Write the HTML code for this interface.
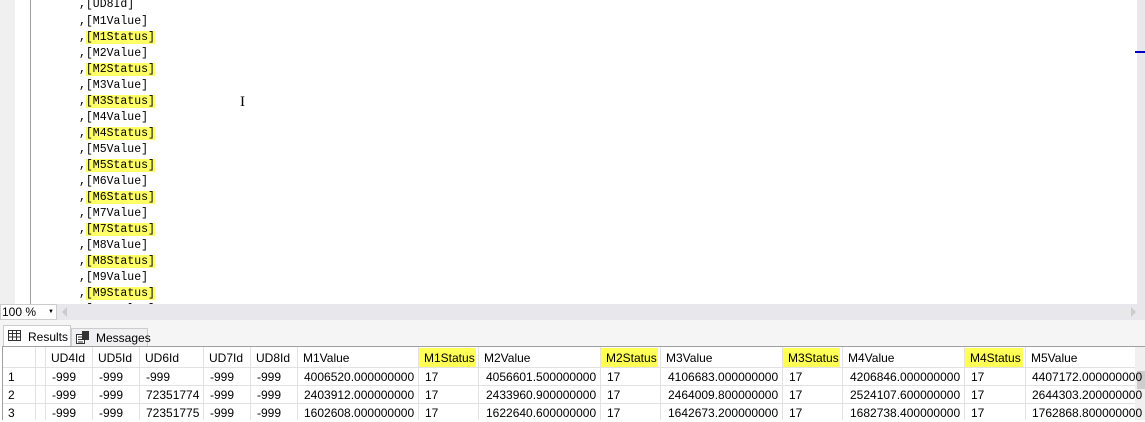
<!DOCTYPE html>
<html><head><meta charset="utf-8"><style>
*{margin:0;padding:0;box-sizing:border-box}
body{width:1145px;height:420px;overflow:hidden;background:#fff;position:relative;font-family:"Liberation Sans",sans-serif}
.abs{position:absolute}
.code{position:absolute;left:79px;font-family:"Liberation Mono",monospace;font-size:11.5px;line-height:16px;height:16px;color:#000;white-space:pre}
.hl{background:#ffff66}
.cell{position:absolute;font-size:12px;color:#000;white-space:nowrap;line-height:18px}
.vl{position:absolute;top:347px;width:1px;height:73px;background:#e2e2e2}
.hlh{position:absolute;background:#ffff55;top:348px;height:19px}
</style></head><body>
<div class="abs" style="left:0;top:0;width:15px;height:304px;background:#f0f0f0"></div>
<div class="abs" style="left:30px;top:0;width:1px;height:304px;background:#a0a0a0"></div>
<div class="abs" style="left:1137px;top:0;width:8px;height:304px;background:#e8e8ec"></div>
<div class="abs" style="left:1135px;top:51px;width:10px;height:2px;background:#0000c8"></div>
<div class="abs" style="left:240px;top:95px;width:8px;height:17px;font-size:15px;line-height:15px;color:#000;font-family:'Liberation Serif',serif">I</div>

<div class="code" style="top:-3px">,[UD8Id]</div>
<div class="code" style="top:14px">,[M1Value]</div>
<div class="code" style="top:30px">,<span class="hl">[M1Status]</span></div>
<div class="code" style="top:46px">,[M2Value]</div>
<div class="code" style="top:62px">,<span class="hl">[M2Status]</span></div>
<div class="code" style="top:78px">,[M3Value]</div>
<div class="code" style="top:94px">,<span class="hl">[M3Status]</span></div>
<div class="code" style="top:110px">,[M4Value]</div>
<div class="code" style="top:126px">,<span class="hl">[M4Status]</span></div>
<div class="code" style="top:142px">,[M5Value]</div>
<div class="code" style="top:158px">,<span class="hl">[M5Status]</span></div>
<div class="code" style="top:174px">,[M6Value]</div>
<div class="code" style="top:190px">,<span class="hl">[M6Status]</span></div>
<div class="code" style="top:206px">,[M7Value]</div>
<div class="code" style="top:222px">,<span class="hl">[M7Status]</span></div>
<div class="code" style="top:238px">,[M8Value]</div>
<div class="code" style="top:254px">,<span class="hl">[M8Status]</span></div>
<div class="code" style="top:270px">,[M9Value]</div>
<div class="code" style="top:286px">,<span class="hl">[M9Status]</span></div>
<div class="code" style="top:302px">,[M10Value]</div>

<div class="abs" style="left:0;top:304px;width:1145px;height:16px;background:#e8e8ec"></div>
<div class="abs" style="left:0;top:304px;width:57px;height:16px;background:#fff;border:1px solid #ccc;font-size:12px;line-height:14px;padding-left:1px">100 %<span style="position:absolute;left:47px;top:0px;font-size:6px">▼</span></div>
<div class="abs" style="left:62px;top:307px;width:0;height:0;border-top:5px solid transparent;border-bottom:5px solid transparent;border-right:5px solid #ccc"></div>
<div class="abs" style="left:1131px;top:307px;width:0;height:0;border-top:5px solid transparent;border-bottom:5px solid transparent;border-left:5px solid #ccc"></div>

<div class="abs" style="left:0;top:320px;width:1145px;height:27px;background:#f5f5f5"></div>
<div class="abs" style="left:3px;top:325px;width:68px;height:23px;background:#fff;border:1px solid #ccc;border-bottom:none;font-size:12px;line-height:22px;padding-left:24px">Results</div>
<svg class="abs" style="left:8px;top:330px" width="13" height="11"><rect x="0.5" y="0.5" width="12" height="10" fill="#fff" stroke="#333"/><path d="M0 3.5H13M0 7H13M4.5 0V11M8.5 0V11" stroke="#333"/></svg>
<div class="abs" style="left:71px;top:328px;width:77px;height:19px;background:#f0f0f2;border:1px solid #ccc;border-bottom:none;font-size:12px;line-height:19px;padding-left:24px">Messages</div>
<svg class="abs" style="left:76px;top:331px" width="14" height="13"><rect x="0.5" y="3.5" width="8" height="9" fill="#fff" stroke="#333"/><rect x="6" y="0" width="7" height="9" fill="#333"/><path d="M2 6H7M2 8.5H7M2 11H7" stroke="#333"/></svg>

<div class="abs" style="left:2px;top:346px;width:1143px;height:74px;border:1px solid #a0a0a0;border-bottom:none;background:#fff"></div>
<div class="abs" style="left:1135px;top:347px;width:10px;height:73px;background:#f0f0f0"></div>
<div class="abs" style="left:1137px;top:371px;width:8px;height:18px;background:#cdcdcd"></div>
<div class="abs" style="left:3px;top:367px;width:1132px;height:1px;background:#e2e2e2"></div>
<div class="abs" style="left:3px;top:385px;width:1132px;height:1px;background:#e2e2e2"></div>
<div class="abs" style="left:3px;top:403px;width:1132px;height:1px;background:#e2e2e2"></div>
<div class="hlh" style="left:419px;width:57px"></div>
<div class="hlh" style="left:601px;width:57px"></div>
<div class="hlh" style="left:783px;width:57px"></div>
<div class="hlh" style="left:965px;width:58px"></div>
<div class="vl" style="left:35px"></div><div class="vl" style="left:45px"></div><div class="vl" style="left:92px"></div><div class="vl" style="left:139px"></div><div class="vl" style="left:203px"></div><div class="vl" style="left:250px"></div><div class="vl" style="left:297px"></div><div class="vl" style="left:418px"></div><div class="vl" style="left:478px"></div><div class="vl" style="left:600px"></div><div class="vl" style="left:660px"></div><div class="vl" style="left:782px"></div><div class="vl" style="left:842px"></div><div class="vl" style="left:964px"></div><div class="vl" style="left:1025px"></div>

<div class="cell" style="top:349px;left:51px">UD4Id</div>
<div class="cell" style="top:349px;left:98px">UD5Id</div>
<div class="cell" style="top:349px;left:145px">UD6Id</div>
<div class="cell" style="top:349px;left:209px">UD7Id</div>
<div class="cell" style="top:349px;left:256px">UD8Id</div>
<div class="cell" style="top:349px;left:303px">M1Value</div>
<div class="cell" style="top:349px;left:424px">M1Status</div>
<div class="cell" style="top:349px;left:484px">M2Value</div>
<div class="cell" style="top:349px;left:606px">M2Status</div>
<div class="cell" style="top:349px;left:666px">M3Value</div>
<div class="cell" style="top:349px;left:788px">M3Status</div>
<div class="cell" style="top:349px;left:848px">M4Value</div>
<div class="cell" style="top:349px;left:970px">M4Status</div>
<div class="cell" style="top:349px;left:1031px">M5Value</div>

<div class="cell" style="top:368px;left:8px">1</div><div class="cell" style="top:368px;left:52px">-999</div><div class="cell" style="top:368px;left:99px">-999</div><div class="cell" style="top:368px;left:146px">-999</div><div class="cell" style="top:368px;left:210px">-999</div><div class="cell" style="top:368px;left:257px">-999</div><div class="cell" style="top:368px;left:304px">4006520.000000000</div><div class="cell" style="top:368px;left:425px">17</div><div class="cell" style="top:368px;left:486px">4056601.500000000</div><div class="cell" style="top:368px;left:607px">17</div><div class="cell" style="top:368px;left:668px">4106683.000000000</div><div class="cell" style="top:368px;left:789px">17</div><div class="cell" style="top:368px;left:850px">4206846.000000000</div><div class="cell" style="top:368px;left:971px">17</div><div class="cell" style="top:368px;left:1032px">4407172.000000000</div>

<div class="cell" style="top:386px;left:8px">2</div><div class="cell" style="top:386px;left:52px">-999</div><div class="cell" style="top:386px;left:99px">-999</div><div class="cell" style="top:386px;left:146px">72351774</div><div class="cell" style="top:386px;left:210px">-999</div><div class="cell" style="top:386px;left:257px">-999</div><div class="cell" style="top:386px;left:304px">2403912.000000000</div><div class="cell" style="top:386px;left:425px">17</div><div class="cell" style="top:386px;left:486px">2433960.900000000</div><div class="cell" style="top:386px;left:607px">17</div><div class="cell" style="top:386px;left:668px">2464009.800000000</div><div class="cell" style="top:386px;left:789px">17</div><div class="cell" style="top:386px;left:850px">2524107.600000000</div><div class="cell" style="top:386px;left:971px">17</div><div class="cell" style="top:386px;left:1032px">2644303.200000000</div>

<div class="cell" style="top:404px;left:8px">3</div><div class="cell" style="top:404px;left:52px">-999</div><div class="cell" style="top:404px;left:99px">-999</div><div class="cell" style="top:404px;left:146px">72351775</div><div class="cell" style="top:404px;left:210px">-999</div><div class="cell" style="top:404px;left:257px">-999</div><div class="cell" style="top:404px;left:304px">1602608.000000000</div><div class="cell" style="top:404px;left:425px">17</div><div class="cell" style="top:404px;left:486px">1622640.600000000</div><div class="cell" style="top:404px;left:607px">17</div><div class="cell" style="top:404px;left:668px">1642673.200000000</div><div class="cell" style="top:404px;left:789px">17</div><div class="cell" style="top:404px;left:850px">1682738.400000000</div><div class="cell" style="top:404px;left:971px">17</div><div class="cell" style="top:404px;left:1032px">1762868.800000000</div>
</body></html>
